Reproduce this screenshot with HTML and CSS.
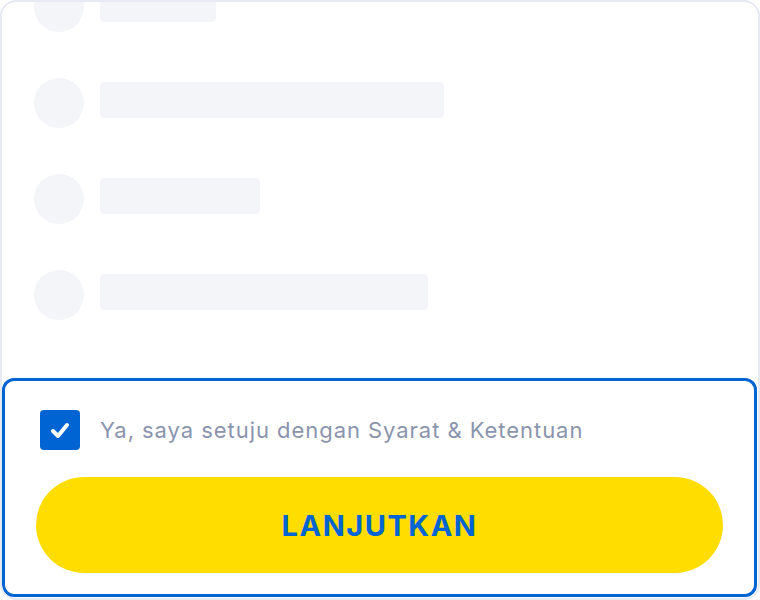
FILE: index.html
```html
<!DOCTYPE html>
<html lang="id">
<head>
<meta charset="utf-8">
<title>Syarat & Ketentuan</title>
<link rel="stylesheet" href="styles.css">
</head>
<body>
<div class="card">
  <div class="list">
    <div class="row"><span class="avatar"></span><span class="bar" style="width:116px"></span></div>
    <div class="row"><span class="avatar"></span><span class="bar" style="width:344px"></span></div>
    <div class="row"><span class="avatar"></span><span class="bar" style="width:160px"></span></div>
    <div class="row"><span class="avatar"></span><span class="bar" style="width:328px"></span></div>
  </div>
  <div class="agree">
    <label class="check-row">
      <span class="checkbox">
        <svg width="40" height="40" viewBox="0 0 40 40" aria-hidden="true"><path d="M13 21 L18 26 L27 15" fill="none" stroke="#fff" stroke-width="4" stroke-linecap="round" stroke-linejoin="round"/></svg>
      </span>
      <span class="check-text">Ya, saya setuju dengan Syarat &amp; Ketentuan</span>
    </label>
    <button class="btn" type="button">LANJUTKAN</button>
  </div>
</div>
</body>
</html>
```

FILE: styles.css
```css
* { box-sizing: border-box; }
html, body { margin: 0; padding: 0; background: #fff; }
body { font-family: Inter, "Noto Sans", sans-serif; }

.card {
  width: 760px;
  height: 600px;
  border: 2px solid #e8eaf3;
  border-radius: 16px;
  display: flex;
  flex-direction: column;
  overflow: hidden;
  background: #fff;
}

.list {
  flex: 1;
  overflow: hidden;
  padding-left: 32px;
}

.row {
  display: flex;
  align-items: flex-start;
  gap: 16px;
  margin-bottom: 46px;
}
.row:first-child { margin-top: -20px; }

.avatar {
  width: 50px;
  height: 50px;
  border-radius: 50%;
  background: #f4f5f9;
  flex: none;
}

.bar {
  display: block;
  height: 36px;
  margin-top: 4px;
  border-radius: 4px;
  background: #f4f5f9;
}

.agree {
  border: 3px solid #0064d2;
  border-radius: 12px;
  margin: 0 1px 1px 0;
  padding: 29px 31px 21px 31px;
  display: flex;
  flex-direction: column;
  gap: 27px;
}

.check-row {
  display: flex;
  align-items: center;
  gap: 20px;
  padding-left: 4px;
}

.checkbox {
  width: 40px;
  height: 40px;
  border-radius: 4px;
  background: #0064d2;
  flex: none;
  display: flex;
}

.check-text {
  font-size: 22px;
  letter-spacing: 0.95px;
  color: #8b94ad;
  line-height: 40px;
}

.btn {
  height: 96px;
  border: none;
  border-radius: 48px;
  background: #ffdd00;
  color: #0064d2;
  font-family: Inter, "Noto Sans", sans-serif;
  font-weight: 700;
  font-size: 29px;
  letter-spacing: 1.5px;
  padding: 0;
}
```
